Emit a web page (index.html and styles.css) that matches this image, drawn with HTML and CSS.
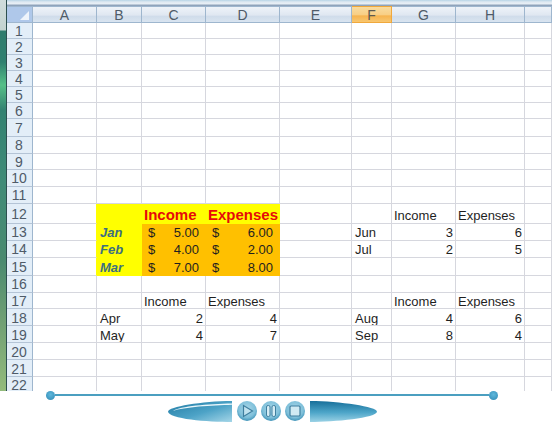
FILE: index.html
```html
<!DOCTYPE html>
<html lang="en">
<head>
<meta charset="utf-8">
<title>Spreadsheet player</title>
<link rel="stylesheet" href="styles.css">
</head>
<body>
<div class="window">
  <div class="strip"></div>
  <div class="sheet">
    <table class="grid">
      <colgroup>
        <col class="c-head"><col class="c-a"><col class="c-b"><col class="c-c"><col class="c-d"><col class="c-e"><col class="c-f"><col class="c-g"><col class="c-h"><col class="c-i">
      </colgroup>
      <thead>
        <tr class="r-head"><th class="corner"><span class="tri"></span></th><th>A</th><th>B</th><th>C</th><th>D</th><th>E</th><th class="active">F</th><th>G</th><th>H</th><th></th></tr>
      </thead>
      <tbody>
        <tr class="r16"><th>1</th><td></td><td></td><td></td><td></td><td></td><td></td><td></td><td></td><td></td></tr>
        <tr class="r16"><th>2</th><td></td><td></td><td></td><td></td><td></td><td></td><td></td><td></td><td></td></tr>
        <tr class="r16"><th>3</th><td></td><td></td><td></td><td></td><td></td><td></td><td></td><td></td><td></td></tr>
        <tr class="r16"><th>4</th><td></td><td></td><td></td><td></td><td></td><td></td><td></td><td></td><td></td></tr>
        <tr class="r16"><th>5</th><td></td><td></td><td></td><td></td><td></td><td></td><td></td><td></td><td></td></tr>
        <tr class="r16"><th>6</th><td></td><td></td><td></td><td></td><td></td><td></td><td></td><td></td><td></td></tr>
        <tr class="r18"><th>7</th><td></td><td></td><td></td><td></td><td></td><td></td><td></td><td></td><td></td></tr>
        <tr class="r17"><th>8</th><td></td><td></td><td></td><td></td><td></td><td></td><td></td><td></td><td></td></tr>
        <tr class="r16"><th>9</th><td></td><td></td><td></td><td></td><td></td><td></td><td></td><td></td><td></td></tr>
        <tr class="r17"><th>10</th><td></td><td></td><td></td><td></td><td></td><td></td><td></td><td></td><td></td></tr>
        <tr class="r17"><th>11</th><td></td><td></td><td></td><td></td><td></td><td></td><td></td><td></td><td></td></tr>
        <tr class="r20"><th>12</th><td class="edge"></td><td class="yellow"></td><td class="yellow title">Income</td><td class="yellow title">Expenses</td><td></td><td></td><td class="lbl">Income</td><td class="lbl">Expenses</td><td></td></tr>
        <tr class="r17"><th>13</th><td class="edge"></td><td class="yellow month">Jan</td><td class="orange"><span class="acc"><span>$</span><span>5.00</span></span></td><td class="orange"><span class="acc"><span>$</span><span>6.00</span></span></td><td></td><td>Jun</td><td class="num">3</td><td class="num">6</td><td></td></tr>
        <tr class="r17"><th>14</th><td class="edge"></td><td class="yellow month">Feb</td><td class="orange"><span class="acc"><span>$</span><span>4.00</span></span></td><td class="orange"><span class="acc"><span>$</span><span>2.00</span></span></td><td></td><td>Jul</td><td class="num">2</td><td class="num">5</td><td></td></tr>
        <tr class="r18"><th>15</th><td class="edge"></td><td class="yellow month">Mar</td><td class="orange"><span class="acc"><span>$</span><span>7.00</span></span></td><td class="orange"><span class="acc"><span>$</span><span>8.00</span></span></td><td></td><td></td><td></td><td></td><td></td></tr>
        <tr class="r17"><th>16</th><td></td><td></td><td></td><td></td><td></td><td></td><td></td><td></td><td></td></tr>
        <tr class="r16 low"><th>17</th><td></td><td></td><td class="lbl">Income</td><td class="lbl">Expenses</td><td></td><td></td><td class="lbl">Income</td><td class="lbl">Expenses</td><td></td></tr>
        <tr class="r17 low"><th>18</th><td></td><td>Apr</td><td class="num">2</td><td class="num">4</td><td></td><td>Aug</td><td class="num">4</td><td class="num">6</td><td></td></tr>
        <tr class="r17 low"><th>19</th><td></td><td>May</td><td class="num">4</td><td class="num">7</td><td></td><td>Sep</td><td class="num">8</td><td class="num">4</td><td></td></tr>
        <tr class="r17 low"><th>20</th><td></td><td></td><td></td><td></td><td></td><td></td><td></td><td></td><td></td></tr>
        <tr class="r17 low"><th>21</th><td></td><td></td><td></td><td></td><td></td><td></td><td></td><td></td><td></td></tr>
        <tr class="r17"><th>22</th><td></td><td></td><td></td><td></td><td></td><td></td><td></td><td></td><td></td></tr>
      </tbody>
    </table>
  </div>
</div>
<div class="scrubber"><span class="knob"></span><span class="track"></span><span class="knob"></span></div>
<div class="player">
  <svg class="lens" width="64" height="21" viewBox="0 0 64 21" aria-hidden="true">
    <defs>
      <linearGradient id="lensL" x1="0" y1="0" x2="1" y2="1"><stop offset="0" stop-color="#1f7aa3"/><stop offset=".55" stop-color="#4da3c7"/><stop offset="1" stop-color="#a5d6e8"/></linearGradient>
      <linearGradient id="lensR" x1="0" y1="0" x2="0" y2="1"><stop offset="0" stop-color="#176f9a"/><stop offset=".55" stop-color="#4ea6c9"/><stop offset="1" stop-color="#9ad1e5"/></linearGradient>
      <radialGradient id="btn" cx=".5" cy=".4" r=".6"><stop offset="0" stop-color="#a9d7e8"/><stop offset=".7" stop-color="#7fc0da"/><stop offset="1" stop-color="#3f93b8"/></radialGradient>
    </defs>
    <path d="M64 0V21C40 21 0 18 0 10.500C0 6 34 0 64 0Z" fill="url(#lensL)"/>
    <path d="M64 2.500C40 3 12 5 5 10C16 6 44 4.500 64 3.800Z" fill="#eaf7fb"/>
  </svg>
  <div class="buttons">
    <svg width="22" height="22" viewBox="0 0 22 22" aria-hidden="true"><circle cx="11" cy="11" r="10" fill="url(#btn)"/><path d="M7.500 5.500V16.500L16.500 11Z" fill="#bfe2ef" stroke="#3f7f9f" stroke-width="1.200"/></svg>
    <svg width="22" height="22" viewBox="0 0 22 22" aria-hidden="true"><circle cx="11" cy="11" r="10" fill="url(#btn)"/><rect x="6.500" y="5.500" width="3.500" height="11" rx="1.500" fill="#d5edf5" stroke="#3f7f9f"/><rect x="12" y="5.500" width="3.500" height="11" rx="1.500" fill="#d5edf5" stroke="#3f7f9f"/></svg>
    <svg width="22" height="22" viewBox="0 0 22 22" aria-hidden="true"><circle cx="11" cy="11" r="10" fill="url(#btn)"/><rect x="6" y="6" width="10" height="10" rx="1" fill="#d0eaf3" stroke="#3f7f9f" stroke-width="1.200"/></svg>
  </div>
  <svg class="lens" width="67" height="21" viewBox="0 0 67 21" aria-hidden="true">
    <path d="M0 0V21C24 21 67 17 67 10.500C67 6 30 0 0 0Z" fill="url(#lensR)"/>
  </svg>
</div>
</body>
</html>
```
FILE: styles.css
```css
html, body { margin: 0; padding: 0; background: #fff; }
body { width: 552px; height: 424px; overflow: hidden; font-family: "Liberation Sans", Arial, sans-serif; }

.window { display: flex; height: 391px; overflow: hidden; }
.strip {
  flex: 0 0 6px;
  border-right: 1px solid #2c4f4f;
  background: linear-gradient(to bottom, #cfdcdc 0, #c3d3d0 30px, #2f7c6e 31px, #2f8070 62px, #55c088 85px, #338272 110px, #3f8b78 180px, #4a8a70 260px, #6f9f74 320px, #93bb7c 391px);
}
.sheet {
  flex: 1;
  padding-top: 6px;
  background: linear-gradient(to bottom, #b8d4e6 0, #dfe9f2 2px, #e9f0f6 4px, #8fa3bb 5px, #8fa3bb 6px);
  background-size: 100% 6px;
  background-repeat: no-repeat;
  overflow: hidden;
}

.grid {
  table-layout: fixed;
  width: 545px;
  border-collapse: separate;
  border-spacing: 0;
  font-size: 13px;
  color: #1f1f1f;
  background: #fff;
}
.c-head { width: 26px; }
.c-a { width: 64px; }
.c-b { width: 45px; }
.c-c { width: 64px; }
.c-d { width: 74px; }
.c-e { width: 72px; }
.c-f { width: 40px; }
.c-g { width: 64px; }
.c-h { width: 69px; }
.c-i { width: 27px; }

.r-head { height: 17px; }
.r16 { height: 16px; }
.r17 { height: 17px; }
.r18 { height: 18px; }
.r20 { height: 20px; }

td {
  padding: 0 0 0 3px;
  border-right: 1px solid #d6d7de;
  border-bottom: 1px solid #d6d7de;
  line-height: 14px;
  white-space: nowrap;
  overflow: hidden;
  vertical-align: bottom;
  box-sizing: border-box;
}
tbody th {
  padding: 0 1px 0 0;
  background: #e3eef8;
  border-right: 1px solid #9eb6ce;
  border-bottom: 1px solid #b4c4d6;
  font-weight: normal;
  font-size: 14px;
  line-height: 14px;
  color: #4f5b68;
  text-align: center;
  box-sizing: border-box;
}
thead th {
  padding: 0;
  background: linear-gradient(to bottom, #eef3f9 0, #dfe7f1 55%, #cfdcea 60%, #d9e4f0 100%);
  border-right: 1px solid #9eb6ce;
  border-bottom: 1px solid #9eb6ce;
  border-top: 1px solid #9eb6ce;
  font-weight: normal;
  font-size: 14px;
  line-height: 14px;
  color: #4f5b68;
  text-align: center;
  box-sizing: border-box;
}
thead th.corner { background: #afc8ea; position: relative; }
.tri {
  position: absolute;
  right: 3px;
  bottom: 2px;
  width: 0;
  height: 0;
  border-left: 9px solid transparent;
  border-bottom: 9px solid #eef4fb;
}
thead th.active { background: linear-gradient(to bottom, #f9dca0 0, #f8cf86 50%, #f6b450 60%, #f8c770 100%); border-color: #f0a83c; color: #5d5a50; }

.low td { line-height: 12px; }
.low th { padding-top: 1px; }
.edge { border-right-color: #ffff00; }
.yellow { background: #ffff00; border-color: #ffff00; }
.orange { background: #ffc000; border-color: #ffc000; padding: 0 6px; }
.title { font-size: 15px; font-weight: bold; color: #e60a0a; line-height: 17px; padding-left: 2px; }
.month { font-weight: bold; font-style: italic; color: #3c6f80; }
.acc { display: flex; justify-content: space-between; }
.num { text-align: right; padding: 0 2px 0 0; }
.lbl { padding-left: 2px; }

.scrubber { display: flex; align-items: center; height: 8px; margin: 0 54px 0 46px; }
.knob {
  flex: 0 0 9px;
  height: 9px;
  border-radius: 50%;
  background: radial-gradient(circle at 50% 40%, #5fb8dc, #2f88b3);
}
.track { flex: 1; height: 2px; background: #4b9fc0; }

.player { display: flex; justify-content: center; align-items: center; margin: 1px 0 0 -7px; height: 22px; gap: 4px; }
.buttons { display: flex; gap: 2px; }
```
